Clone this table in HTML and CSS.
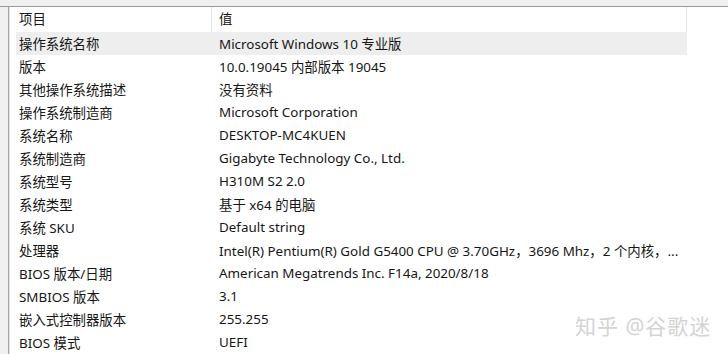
FILE: index.html
```html
<!DOCTYPE html>
<html lang="zh-CN">
<head>
<meta charset="utf-8">
<title>系统摘要</title>
<link rel="stylesheet" href="styles.css">
</head>
<body>
<div class="window">
  <div class="topbar"></div>
  <div class="main">
    <div class="sidebar"></div>
    <div class="panel">
      <div class="list">
        <div class="row header">
          <div class="c1">项目</div>
          <div class="c2">值</div>
        </div>
        <div class="row selected"><div class="c1">操作系统名称</div><div class="c2">Microsoft Windows 10 专业版</div></div>
        <div class="row"><div class="c1">版本</div><div class="c2">10.0.19045 内部版本 19045</div></div>
        <div class="row"><div class="c1">其他操作系统描述</div><div class="c2">没有资料</div></div>
        <div class="row"><div class="c1">操作系统制造商</div><div class="c2">Microsoft Corporation</div></div>
        <div class="row"><div class="c1">系统名称</div><div class="c2">DESKTOP-MC4KUEN</div></div>
        <div class="row"><div class="c1">系统制造商</div><div class="c2">Gigabyte Technology Co., Ltd.</div></div>
        <div class="row"><div class="c1">系统型号</div><div class="c2">H310M S2 2.0</div></div>
        <div class="row"><div class="c1">系统类型</div><div class="c2">基于 x64 的电脑</div></div>
        <div class="row"><div class="c1">系统 SKU</div><div class="c2">Default string</div></div>
        <div class="row"><div class="c1">处理器</div><div class="c2">Intel(R) Pentium(R) Gold G5400 CPU @ 3.70GHz，3696 Mhz，2 个内核，...</div></div>
        <div class="row"><div class="c1">BIOS 版本/日期</div><div class="c2">American Megatrends Inc. F14a, 2020/8/18</div></div>
        <div class="row"><div class="c1">SMBIOS 版本</div><div class="c2">3.1</div></div>
        <div class="row"><div class="c1">嵌入式控制器版本</div><div class="c2">255.255</div></div>
        <div class="row"><div class="c1">BIOS 模式</div><div class="c2">UEFI</div></div>
      </div>
      <div class="watermark">知乎 @谷歌迷</div>
    </div>
  </div>
</div>
</body>
</html>
```
FILE: styles.css
```css
html, body {
  margin: 0;
  padding: 0;
  background: #ffffff;
}
.window {
  width: 728px;
  height: 354px;
  overflow: hidden;
  display: flex;
  flex-direction: column;
  font-family: "Noto Sans", "Noto Sans CJK SC", sans-serif;
  font-size: 13.4px;
  color: #161616;
}
.topbar {
  height: 6px;
  background: #f0f0f0;
  border-bottom: 1px solid #999999;
  flex: none;
}
.main {
  flex: 1;
  display: flex;
  min-height: 0;
}
.sidebar {
  width: 8px;
  background: #f0f0f0;
  border-right: 1px solid #a6a6a6;
  flex: none;
}
.panel {
  position: relative;
  flex: 1;
  padding-left: 7px;
  box-shadow: inset 1px 0 0 #e2e2e2;
}
.list {
  width: 671px;
}
.row {
  display: flex;
  height: 23px;
  box-sizing: border-box;
  padding-bottom: 1px;
  align-items: center;
  white-space: nowrap;
}
.row.header {
  height: 25px;
  padding-bottom: 0;
}
.row.header .c1,
.row.header .c2 {
  border-right: 1px solid #e5e5e5;
  height: 25px;
  line-height: 24px;
}
.row.selected {
  background: #eeeeee;
}
.c1 {
  width: 196px;
  padding-left: 3px;
  box-sizing: border-box;
  flex: none;
}
.c2 {
  flex: 1;
  padding-left: 7px;
}
.watermark {
  position: absolute;
  left: 566px;
  top: 303px;
  font-size: 21px;
  color: #d4d4d4;
  letter-spacing: 1px;
  white-space: nowrap;
}
```
